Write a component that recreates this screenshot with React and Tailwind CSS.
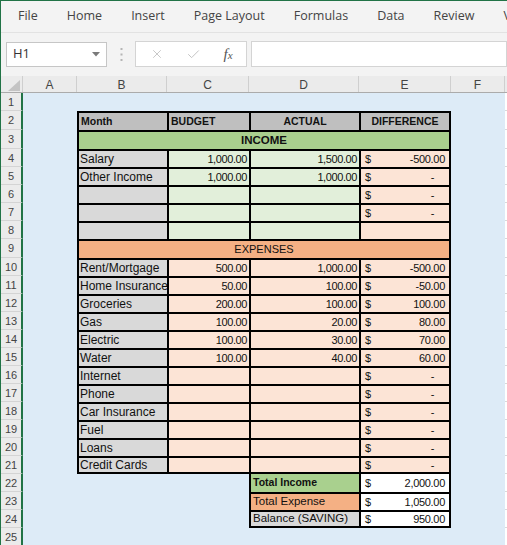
import { X, Check } from 'lucide-react'

const menuItems = ['File', 'Home', 'Insert', 'Page Layout', 'Formulas', 'Data', 'Review', 'View']

const columns = [
  { label: 'A', w: 'w-[54px]' },
  { label: 'B', w: 'w-[90px]' },
  { label: 'C', w: 'w-[82px]' },
  { label: 'D', w: 'w-[110px]' },
  { label: 'E', w: 'w-[92px]' },
  { label: 'F', w: 'w-[54px]' },
]

const income = [
  { label: 'Salary', budget: '1,000.00', actual: '1,500.00', diff: '-500.00' },
  { label: 'Other Income', budget: '1,000.00', actual: '1,000.00', diff: '-' },
  { label: '', diff: '-' },
  { label: '', diff: '-' },
  { label: '', diff: null },
]

const expenses = [
  { label: 'Rent/Mortgage', budget: '500.00', actual: '1,000.00', diff: '-500.00' },
  { label: 'Home Insurance', budget: '50.00', actual: '100.00', diff: '-50.00' },
  { label: 'Groceries', budget: '200.00', actual: '100.00', diff: '100.00' },
  { label: 'Gas', budget: '100.00', actual: '20.00', diff: '80.00' },
  { label: 'Electric', budget: '100.00', actual: '30.00', diff: '70.00' },
  { label: 'Water', budget: '100.00', actual: '40.00', diff: '60.00' },
  { label: 'Internet', diff: '-' },
  { label: 'Phone', diff: '-' },
  { label: 'Car Insurance', diff: '-' },
  { label: 'Fuel', diff: '-' },
  { label: 'Loans', diff: '-' },
  { label: 'Credit Cards', diff: '-' },
]

const totals = [
  { label: 'Total Income', value: '2,000.00', bg: 'bg-[#a9d08e]', weight: 'font-bold text-[10.5px]' },
  { label: 'Total Expense', value: '1,050.00', bg: 'bg-[#f4b084]', weight: 'text-[11.5px]' },
  { label: 'Balance (SAVING)', value: '950.00', bg: 'bg-[#d9d9d9]', weight: 'text-[11.5px]' },
]

function Row({ n, h = 'h-[18px]', children }) {
  return (
    <div className={`flex ${h}`}>
      <div className="w-[22px] shrink-0 bg-[#ebebeb] border-r-2 border-r-[#217346] border-b border-b-[#d4d4d4] flex items-center justify-center pt-[1px] text-[11px] text-[#444]">
        {n}
      </div>
      <div className="w-[54px] shrink-0" />
      {children || <div className="w-[374px] shrink-0" />}
      <div className="w-[54px] shrink-0" />
      <div className="flex-1 bg-white border-b border-[#d9d9d9]" />
    </div>
  )
}

function Diff({ value, last }) {
  const base = `w-[92px] shrink-0 border-l-2 border-t-2 border-r-2 border-black bg-[#fce4d6] flex items-center justify-between pl-[4px] text-[11px] tracking-[-0.3px] ${last ? 'border-b-2' : ''}`
  if (value === null) return <div className={base} />
  return (
    <div className={`${base} ${value === '-' ? 'pr-[15px]' : 'pr-[4px]'}`}>
      <span>$</span>
      <span>{value}</span>
    </div>
  )
}

function LineRow({ n, item, fill, last }) {
  return (
    <Row n={n}>
      <div className={`w-[90px] shrink-0 border-l-2 border-t-2 border-black bg-[#d9d9d9] flex items-center pl-[1px] text-[12px] whitespace-nowrap overflow-hidden ${last ? 'border-b-2' : ''}`}>
        {item.label}
      </div>
      <div className={`w-[82px] shrink-0 border-l-2 border-t-2 border-black ${fill} flex items-center justify-end pr-[2px] text-[11px] tracking-[-0.4px] ${last ? 'border-b-2' : ''}`}>
        {item.budget}
      </div>
      <div className={`w-[110px] shrink-0 border-l-2 border-t-2 border-black ${fill} flex items-center justify-end pr-[2px] text-[11px] tracking-[-0.4px] ${last ? 'border-b-2' : ''}`}>
        {item.actual}
      </div>
      <Diff value={item.diff} last={last} />
    </Row>
  )
}

export default function App() {
  return (
    <div className="w-[507px] h-[545px] overflow-hidden bg-[#f3f3f3] border-l border-t border-[#217346] text-[#111]">
      {/* Ribbon tabs */}
      <div className="h-[32px] flex items-center gap-[29px] pl-[17px] border-b border-[#e2e2e2] overflow-hidden font-['Open_Sans',sans-serif] text-[12.5px] text-[#444] whitespace-nowrap">
        {menuItems.map((m) => (
          <span key={m}>{m}</span>
        ))}
      </div>

      {/* Formula bar */}
      <div className="h-[43px] flex items-center pb-[1px] font-['Open_Sans',sans-serif]">
        <div className="ml-[5px] w-[101px] h-[25px] bg-white border border-[#c6c6c6] flex items-center justify-between pl-[6px] pr-[6px] text-[13px] text-[#333]">
          <span>H1</span>
          <svg width="8" height="5" viewBox="0 0 8 5">
            <path d="M0 0 L8 0 L4 4.5 Z" fill="#7a7a7a" />
          </svg>
        </div>
        <div className="w-[28px] flex justify-center">
          <svg width="3" height="13" viewBox="0 0 3 13">
            <rect x="0.5" y="0" width="2" height="2" fill="#b5b5b5" />
            <rect x="0.5" y="5.5" width="2" height="2" fill="#b5b5b5" />
            <rect x="0.5" y="11" width="2" height="2" fill="#b5b5b5" />
          </svg>
        </div>
        <div className="w-[112px] h-[26px] bg-white border border-[#d4d4d4] flex items-center">
          <div className="w-[40px] flex justify-center pl-[2px]">
            <X size={14} strokeWidth={1.4} className="text-[#bcbcbc]" />
          </div>
          <div className="w-[34px] flex justify-center">
            <Check size={15} strokeWidth={1.4} className="text-[#bcbcbc]" />
          </div>
          <div className="w-[36px] flex justify-center items-baseline font-['Liberation_Serif',serif] italic text-[#555]">
            <span className="text-[15px]">f</span>
            <span className="text-[11px]">x</span>
          </div>
        </div>
        <div className="ml-[4px] flex-1 h-[26px] bg-white border border-[#d4d4d4]" />
      </div>

      {/* Column headers */}
      <div className="flex h-[17px] bg-[#ebebeb] border-b border-[#ababab] font-['Liberation_Sans',sans-serif] text-[12px] text-[#444]">
        <div className="w-[22px] shrink-0 border-r border-[#cfcfcf] flex items-end justify-end pr-[2px] pb-[1px]">
          <svg width="12" height="11" viewBox="0 0 12 11">
            <path d="M12 0 L12 11 L0 11 Z" fill="#c4c4c4" />
          </svg>
        </div>
        {columns.map((c) => (
          <div key={c.label} className={`${c.w} shrink-0 border-r border-[#cfcfcf] flex items-center justify-center pt-[1px]`}>
            {c.label}
          </div>
        ))}
        <div className="flex-1" />
      </div>

      {/* Sheet */}
      <div className="bg-[#ddebf7] font-['Liberation_Sans',sans-serif]">
        <Row n={1} />
        <Row n={2} h="h-[19px]">
          <div className="w-[90px] shrink-0 border-l-2 border-t-2 border-black bg-[#bfbfbf] flex items-center pl-[2px] text-[10.5px] font-bold">
            Month
          </div>
          <div className="w-[82px] shrink-0 border-l-2 border-t-2 border-black bg-[#bfbfbf] flex items-center pl-[2px] text-[10.5px] font-bold">
            BUDGET
          </div>
          <div className="w-[110px] shrink-0 border-l-2 border-t-2 border-black bg-[#bfbfbf] flex items-center justify-center text-[10.5px] font-bold">
            ACTUAL
          </div>
          <div className="w-[92px] shrink-0 border-l-2 border-t-2 border-r-2 border-black bg-[#bfbfbf] flex items-center justify-center text-[10.5px] font-bold">
            DIFFERENCE
          </div>
        </Row>
        <Row n={3} h="h-[19px]">
          <div className="w-[374px] shrink-0 border-l-2 border-t-2 border-r-2 border-black bg-[#a9d08e] flex items-center justify-center text-[11.5px] font-bold">
            INCOME
          </div>
        </Row>
        {income.map((item, i) => (
          <LineRow key={i} n={4 + i} item={item} fill="bg-[#e2efda]" />
        ))}
        <Row n={9} h="h-[19px]">
          <div className="w-[374px] shrink-0 border-l-2 border-t-2 border-r-2 border-black bg-[#f4b084] flex items-center justify-center text-[11px]">
            EXPENSES
          </div>
        </Row>
        {expenses.map((item, i) => (
          <LineRow key={i} n={10 + i} item={item} fill="bg-[#fce4d6]" last={i === expenses.length - 1} />
        ))}
        {totals.map((t, i) => (
          <Row key={t.label} n={22 + i}>
            <div className="w-[172px] shrink-0" />
            <div className={`w-[110px] shrink-0 border-l-2 border-black ${t.bg} ${t.weight} flex items-center pl-[2px] whitespace-nowrap ${i > 0 ? 'border-t-2' : ''} ${i === totals.length - 1 ? 'border-b-2' : ''}`}>
              {t.label}
            </div>
            <div className={`w-[92px] shrink-0 border-l-2 border-r-2 border-black bg-white flex items-center justify-between pl-[4px] pr-[4px] text-[11px] tracking-[-0.3px] ${i > 0 ? 'border-t-2' : ''} ${i === totals.length - 1 ? 'border-b-2' : ''}`}>
              <span>$</span>
              <span>{t.value}</span>
            </div>
          </Row>
        ))}
        <Row n={25} />
      </div>
    </div>
  )
}
